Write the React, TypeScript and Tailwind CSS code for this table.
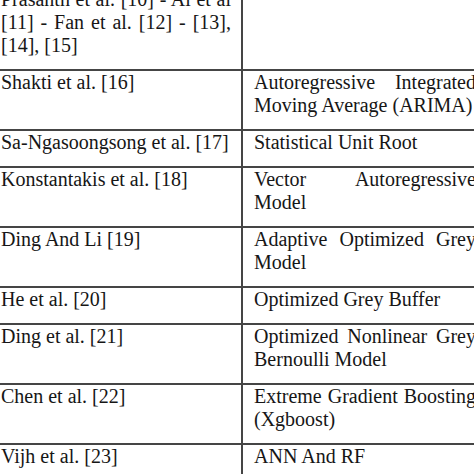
import React from "react";

const rows: [string, string][] = [
  ["Prasanth et al. [10] - Al et al [11] - Fan et al. [12] - [13], [14], [15]", ""],
  ["Shakti et al. [16]", "Autoregressive Integrated Moving Average (ARIMA)"],
  ["Sa-Ngasoongsong et al. [17]", "Statistical Unit Root"],
  ["Konstantakis et al. [18]", "Vector Autoregressive Model"],
  ["Ding And Li [19]", "Adaptive Optimized Grey Model"],
  ["He et al. [20]", "Optimized Grey Buffer"],
  ["Ding et al. [21]", "Optimized Nonlinear Grey Bernoulli Model"],
  ["Chen et al. [22]", "Extreme Gradient Boosting (Xgboost)"],
  ["Vijh et al. [23]", "ANN And RF"],
];

export default function App() {
  return (
    <div className="w-[474px] h-[474px] overflow-hidden bg-white">
      <div
        className="w-[476px] -mt-[12px] flex flex-col text-[20px] leading-[23px] text-[#161616]"
        style={{ fontFamily: '"Liberation Serif", "Times New Roman", serif' }}
      >
        {rows.map(([l, r], i) => (
          <div
            key={i}
            className={
              "flex " + (i === 0 ? "pt-[0px]" : "border-t-2 border-[#454545]")
            }
          >
            <div className="w-[243px] shrink-0 border-r-2 border-[#454545] pl-[1px] pr-[10px] pb-[12px] text-justify">
              {l}
            </div>
            <div className="w-[233px] shrink-0 pl-[11px] pb-[12px] text-justify">
              {r}
            </div>
          </div>
        ))}
      </div>
    </div>
  );
}
